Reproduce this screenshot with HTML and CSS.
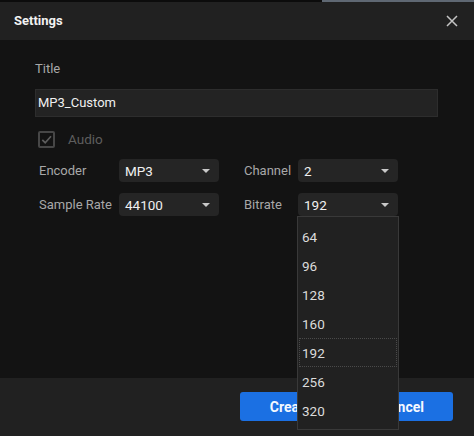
FILE: index.html
```html
<!DOCTYPE html>
<html>
<head>
<meta charset="utf-8">
<link rel="stylesheet" href="styles.css">
</head>
<body>
<div class="page">
  <div class="topstrip"><div class="topstrip-light"></div></div>
  <div class="header">
    <span class="header-title">Settings</span>
    <svg class="close" width="12" height="12" viewBox="0 0 12 12"><path d="M1 1L11 11M11 1L1 11" stroke="#c4c4c4" stroke-width="1.5" fill="none"/></svg>
  </div>
  <div class="content">
    <div class="field-label">Title</div>
    <div class="input">MP3_Custom</div>
    <div class="check-row">
      <span class="checkbox"><svg width="13" height="13" viewBox="0 0 13 13"><path d="M2.3 6.8L5.2 9.7L11 3.3" stroke="#5d5d5d" stroke-width="1.7" fill="none"/></svg></span>
      <span class="check-label">Audio</span>
    </div>
    <div class="grid">
      <span class="label">Encoder</span>
      <div class="select"><span>MP3</span><span class="arrow"></span></div>
      <span class="label label2">Channel</span>
      <div class="select"><span>2</span><span class="arrow"></span></div>
      <span class="label">Sample Rate</span>
      <div class="select"><span>44100</span><span class="arrow"></span></div>
      <span class="label label2">Bitrate</span>
      <div class="select open"><span>192</span><span class="arrow"></span></div>
    </div>
  </div>
  <div class="footer">
    <button class="btn">Create</button>
    <button class="btn">Cancel</button>
  </div>
  <div class="dropdown">
    <div class="item">64</div>
    <div class="item">96</div>
    <div class="item">128</div>
    <div class="item">160</div>
    <div class="item focused">192</div>
    <div class="item">256</div>
    <div class="item">320</div>
  </div>
</div>
</body>
</html>
```
FILE: styles.css
```css
* { box-sizing: border-box; }
html, body { margin: 0; padding: 0; background: #131313; }
body { font-family: Roboto, "Liberation Sans", sans-serif; font-size: 13px; }
.page { position: relative; width: 474px; height: 436px; overflow: hidden; display: flex; flex-direction: column; }
.topstrip { height: 2px; background: #0c0c0c; display: flex; justify-content: flex-end; }
.topstrip-light { width: 152px; background: #5f6873; }
.header { height: 38px; background: #212121; display: flex; align-items: center; justify-content: space-between; padding: 0 16px 0 14px; }
.header-title { color: #f2f2f2; font-weight: 700; font-size: 13px; margin-top: -1px; }
.close { display: block; }
.content { height: 338px; background: #131313; padding: 21px 36px 0 35px; display: flex; flex-direction: column; }
.field-label { color: #a8a8a8; line-height: 16px; height: 16px; }
.input { margin-top: 12px; height: 28px; background: #232323; border: 1px solid #2d2d2d; color: #f0f0f0; padding-left: 2px; line-height: 26px; }
.check-row { margin-top: 14px; height: 17px; display: flex; align-items: center; padding-left: 3px; }
.checkbox { width: 17px; height: 17px; border: 2px solid #474747; border-radius: 2px; display: flex; align-items: center; justify-content: center; }
.checkbox svg { display: block; }
.check-label { margin-left: 13px; color: #5e5e5e; font-size: 13.5px; margin-top: -1px; }
.grid { margin-top: 11px; display: grid; grid-template-columns: 84px 100px 79px 100px; grid-auto-rows: 23px; row-gap: 11px; align-items: center; }
.label { color: #a8a8a8; padding-left: 4px; }
.label2 { padding-left: 25px; }
.select { height: 23px; background: #252525; border-radius: 4px; color: #f0f0f0; display: flex; align-items: center; justify-content: space-between; padding: 0 9px 0 6px; font-size: 13.5px; }
.arrow { width: 0; height: 0; border-left: 4px solid transparent; border-right: 4px solid transparent; border-top: 4px solid #c8c8c8; }
.footer { flex: 1; background: #212121; display: flex; justify-content: flex-end; align-items: flex-start; padding: 14px 21px 0 0; gap: 11px; }
.btn { width: 101px; height: 29px; border: none; border-radius: 3px; background: #1b70e3; color: #f4f8ff; font-family: Roboto, "Liberation Sans", sans-serif; font-weight: 700; font-size: 14px; padding: 0; }
.dropdown { position: absolute; left: 297px; top: 216px; width: 102px; height: 214px; background: #212121; border: 1px solid #393939; padding: 5px 1px 0 1px; }
.item { height: 29px; color: #dcdcdc; font-size: 13.5px; display: flex; align-items: center; padding-left: 3px; }
.item.focused { border: 1px dotted #4a4a4a; padding-left: 2px; }
```
